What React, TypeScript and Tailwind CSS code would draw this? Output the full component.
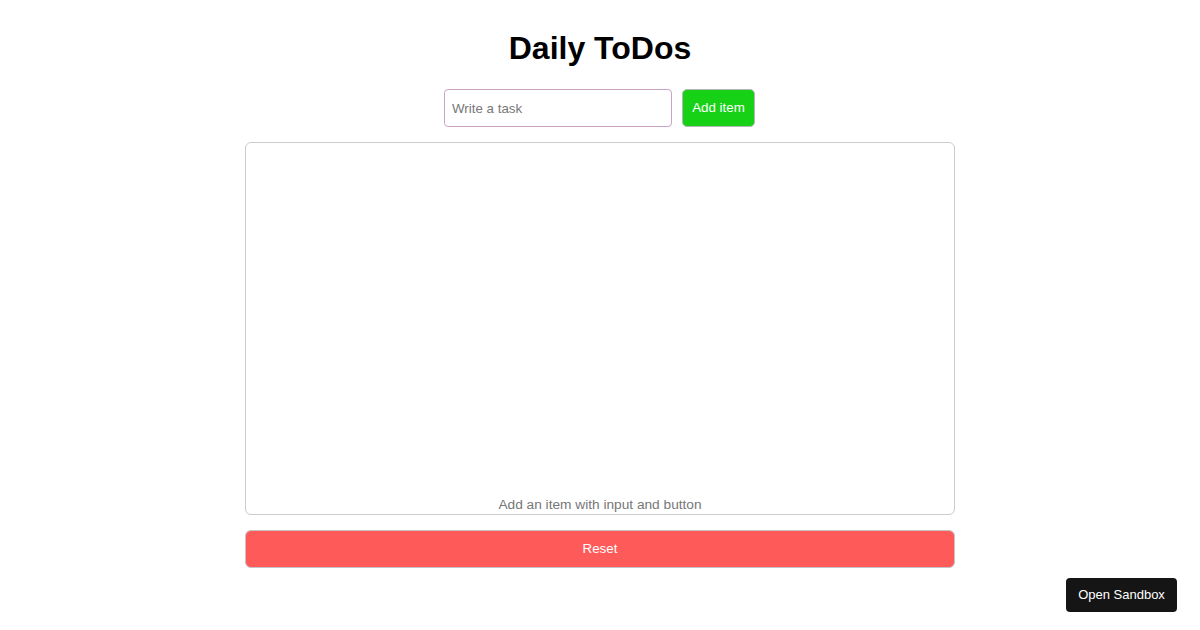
export default function App() {
  return (
    <div className="min-h-[630px] bg-white font-['Liberation_Sans',Arial,sans-serif] relative">
      <div className="flex flex-col items-center pt-[28px]">
        {/* Titulo */}
        <h1 className="text-[32px] leading-[40px] font-bold text-black">Daily ToDos</h1>

        {/* Campo + botão */}
        <div className="w-[312px] flex items-center gap-[10px] mt-[21px]">
          <input
            type="text"
            placeholder="Write a task"
            className="w-[228px] h-[38px] px-[7px] text-[13.33px] border border-[#c9a3c9] rounded-[4px] outline-none placeholder:text-[#777]"
          />
          <button className="w-[73px] h-[38px] bg-[#17d117] text-white text-[13.33px] border border-[#b5b5b5] rounded-[5px]">
            Add item
          </button>
        </div>

        {/* Lista */}
        <div className="w-[710px] h-[373px] mt-[15px] border border-[#cccccc] rounded-[6px] flex flex-col justify-end items-center">
          <p className="text-[13.7px] leading-[18px] text-[#777]">Add an item with input and button</p>
        </div>

        <button className="w-[710px] h-[38px] mt-[15px] bg-[#ff5a5a] text-white text-[13.33px] border border-[#c4c4c4] rounded-[6px]">
          Reset
        </button>
      </div>

      <button className="absolute right-[23px] top-[578px] w-[111px] h-[34px] bg-[#151515] text-white text-[13px] rounded-[4px]">
        Open Sandbox
      </button>
    </div>
  );
}
